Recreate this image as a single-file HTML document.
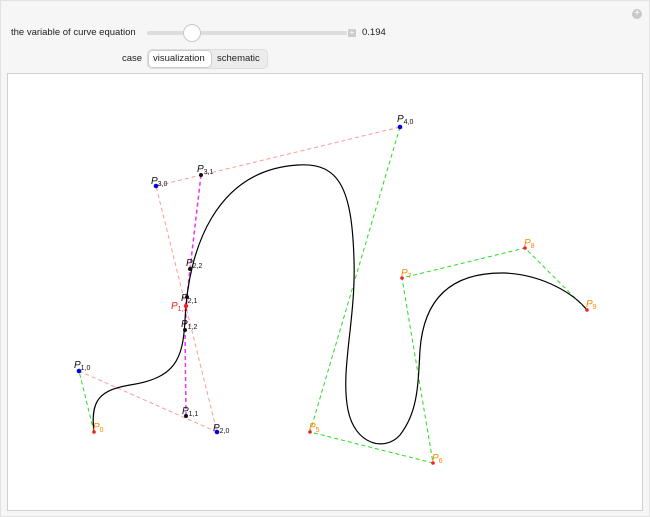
<!DOCTYPE html>
<html><head><style>
body{margin:0;background:#f6f6f6;width:650px;height:517px;overflow:hidden;font-family:"Liberation Sans",sans-serif;position:relative;}
.lbl{position:absolute;font-size:9.5px;color:#222;}
</style></head><body>
<div style="position:absolute;left:0;top:0;width:648px;height:515px;border:1px solid #e2e2e2;"></div>
<div style="position:absolute;left:632px;top:9px;width:10px;height:10px;border-radius:50%;background:#c8c8c8;color:#fff;font-size:10px;line-height:10px;text-align:center;">+</div>
<div class="lbl" style="left:11px;top:27px;">the variable of curve equation</div>
<div style="position:absolute;left:147px;top:31px;width:200px;height:4px;background:#ddd;border-radius:2px;"></div>
<div style="position:absolute;left:183px;top:24px;width:18px;height:18px;border-radius:50%;background:#fff;border:1px solid #c8c8c8;box-sizing:border-box;"></div>
<div style="position:absolute;left:348px;top:29px;width:8px;height:8px;background:#ccc;border-radius:1px;color:#fff;font-size:8px;line-height:8px;text-align:center;">+</div>
<div class="lbl" style="left:362px;top:27px;">0.194</div>
<div class="lbl" style="left:122px;top:53px;">case</div>
<div style="position:absolute;left:147px;top:49px;width:121px;height:20px;background:#ececec;border:1px solid #ddd;border-radius:5px;box-sizing:border-box;"></div>
<div style="position:absolute;left:148px;top:50px;width:64px;height:18px;background:#fff;border:1px solid #ccc;border-radius:5px;box-sizing:border-box;"></div>
<div class="lbl" style="left:153px;top:53px;">visualization</div>
<div class="lbl" style="left:217px;top:53px;">schematic</div>
<svg style="position:absolute;left:0;top:0" width="650" height="517" font-family="Liberation Sans,sans-serif" font-size="10">
<rect x="7.5" y="73.5" width="635" height="437" fill="#fff" stroke="#d0d0d0"/>
<g fill="none" stroke-dasharray="4,3" stroke-width="1">
<polyline points="79,371 217,432 156,186 400,127" stroke="#f99"/>
<polyline points="94,432 79,371" stroke="#2d2"/>
<polyline points="400,127 310,432 433,463 402,278 525,248 587,310" stroke="#2d2"/>
<polyline points="186,416 185,330 187,297 190,269 201,175" stroke="#e3e" stroke-width="1.5"/>
</g>
<path d="M94,432 C90,400 100,390 130,385 C175,378 183,360 185,320 C188,250 215,170 298,165 C340,162 352,190 354,260 C356,320 340,370 348,410 C355,445 385,452 400,435 C418,412 418,385 420,350 C424,295 455,272 505,273 C545,275 575,295 587,310" fill="none" stroke="#000" stroke-width="1.2"/>
<g fill="#00e"><circle cx="79" cy="371" r="2.3"/><circle cx="217" cy="432" r="2.3"/><circle cx="156" cy="186" r="2.3"/><circle cx="400" cy="127" r="2.3"/></g>
<g fill="#111"><circle cx="186" cy="416" r="2"/><circle cx="185" cy="330" r="2"/><circle cx="187" cy="297" r="2"/><circle cx="190" cy="269" r="2"/><circle cx="201" cy="175" r="2"/></g>
<g fill="#e22"><circle cx="94" cy="432" r="1.8"/><circle cx="186" cy="306" r="2.2"/><circle cx="310" cy="432" r="1.8"/><circle cx="433" cy="463" r="1.8"/><circle cx="402" cy="278" r="1.8"/><circle cx="525" cy="248" r="1.8"/><circle cx="587" cy="310" r="1.8"/></g>
<g fill="#111" font-style="italic">
<text x="74" y="368">P<tspan font-size="7" font-style="normal" dy="2">1,0</tspan></text>
<text x="213" y="431">P<tspan font-size="7" font-style="normal" dy="2">2,0</tspan></text>
<text x="151" y="184">P<tspan font-size="7" font-style="normal" dy="2">3,0</tspan></text>
<text x="397" y="122">P<tspan font-size="7" font-style="normal" dy="2">4,0</tspan></text>
<text x="182" y="414">P<tspan font-size="7" font-style="normal" dy="2">1,1</tspan></text>
<text x="181" y="327">P<tspan font-size="7" font-style="normal" dy="2">1,2</tspan></text>
<text x="181" y="301">P<tspan font-size="7" font-style="normal" dy="2">2,1</tspan></text>
<text x="186" y="266">P<tspan font-size="7" font-style="normal" dy="2">2,2</tspan></text>
<text x="197" y="172">P<tspan font-size="7" font-style="normal" dy="2">3,1</tspan></text>
</g>
<text x="171" y="309" fill="#e22" font-style="italic">P<tspan font-size="7" font-style="normal" dy="2">1,3</tspan></text>
<g fill="#f80" font-style="italic">
<text x="93" y="430">P<tspan font-size="7" font-style="normal" dy="2">0</tspan></text>
<text x="309" y="430">P<tspan font-size="7" font-style="normal" dy="2">5</tspan></text>
<text x="432" y="461">P<tspan font-size="7" font-style="normal" dy="2">6</tspan></text>
<text x="401" y="276">P<tspan font-size="7" font-style="normal" dy="2">7</tspan></text>
<text x="524" y="246">P<tspan font-size="7" font-style="normal" dy="2">8</tspan></text>
<text x="586" y="307">P<tspan font-size="7" font-style="normal" dy="2">9</tspan></text>
</g>
</svg>
</body></html>
